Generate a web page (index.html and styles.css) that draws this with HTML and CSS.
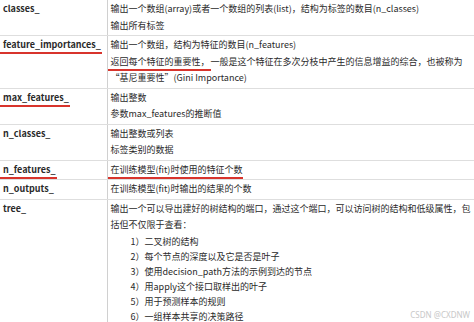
FILE: index.html
```html
<!DOCTYPE html>
<html lang="zh">
<head>
<meta charset="utf-8">
<link rel="stylesheet" href="styles.css">
</head>
<body>
<table class="attrs">
  <colgroup>
    <col class="col-name">
    <col class="col-desc">
  </colgroup>
  <tr>
    <td class="name">classes_</td>
    <td class="desc">输出一个数组(array)或者一个数组的列表(list)，结构为标签的数目(n_classes)<br>输出所有标签</td>
  </tr>
  <tr>
    <td class="name"><span class="mark">feature_importances_</span></td>
    <td class="desc">输出一个数组，结构为特征的数目(n_features)<br><span class="mark">返回每个特征的重要性，</span>一般是这个特征在多次分枝中产生的信息增益的综合，也被称为<br>“基尼重要性”(Gini Importance)</td>
  </tr>
  <tr>
    <td class="name"><span class="mark">max_features_</span></td>
    <td class="desc">输出整数<br>参数max_features的推断值</td>
  </tr>
  <tr>
    <td class="name">n_classes_</td>
    <td class="desc">输出整数或列表<br>标签类别的数据</td>
  </tr>
  <tr>
    <td class="name"><span class="mark">n_features_</span></td>
    <td class="desc"><span class="mark">在训练模型(fit)时使用的特征个数</span></td>
  </tr>
  <tr>
    <td class="name">n_outputs_</td>
    <td class="desc">在训练模型(fit)时输出的结果的个数</td>
  </tr>
  <tr class="last">
    <td class="name">tree_</td>
    <td class="desc">输出一个可以导出建好的树结构的端口，通过这个端口，可以访问树的结构和低级属性，包<br>括但不仅限于查看：
      <ol class="items">
        <li>1）二叉树的结构</li>
        <li>2）每个节点的深度以及它是否是叶子</li>
        <li>3）使用decision_path方法的示例到达的节点</li>
        <li>4）用apply这个接口取样出的叶子</li>
        <li>5）用于预测样本的规则</li>
        <li>6）一组样本共享的决策路径</li>
      </ol>
    </td>
  </tr>
</table>
<div class="watermark">CSDN @CXDNW</div>
</body>
</html>
```

FILE: styles.css
```css
html, body {
  margin: 0;
  padding: 0;
  background: #ffffff;
}
body {
  width: 474px;
  height: 322px;
  overflow: hidden;
  position: relative;
  font-family: "Noto Sans CJK SC", "Noto Sans", sans-serif;
  font-size: 9px;
  color: #2a2a2a;
}
.attrs {
  border-collapse: collapse;
  table-layout: fixed;
  width: 474px;
}
.col-name {
  width: 107px;
}
.attrs td {
  vertical-align: top;
  padding: 1px 0 1px 0;
  line-height: 16.5px;
  border-bottom: 1px solid #dedede;
}
.attrs .name {
  padding-left: 3px;
  font-weight: 700;
  border-right: 1px solid #d0d0d0;
}
.attrs .desc {
  padding-left: 3px;
  white-space: nowrap;
}
.attrs .last td {
  border-bottom: none;
}
.mark {
  padding: 0 1px 3px 3px;
  margin-left: -3px;
  background: linear-gradient(#d8342c, #d8342c) left bottom / 100% 2px no-repeat;
}
.items {
  list-style: none;
  margin: 0;
  padding: 0 0 0 20px;
}
.items li {
  line-height: 15px;
}
.watermark {
  position: absolute;
  right: 4px;
  bottom: 2px;
  font-family: "Noto Sans", sans-serif;
  font-size: 8px;
  color: #c8c8c8;
}
```
